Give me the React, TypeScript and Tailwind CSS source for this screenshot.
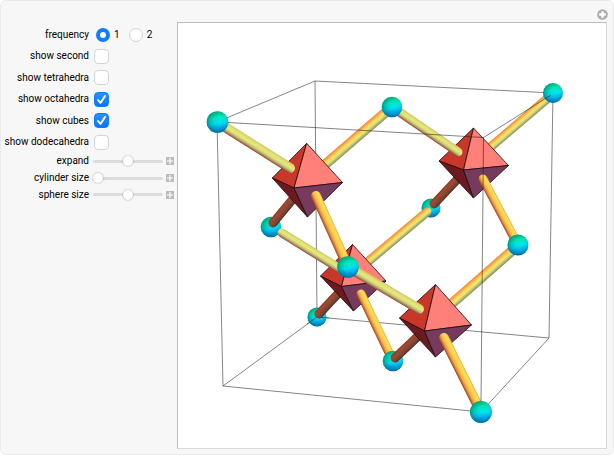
import { useState } from "react";

type Point = [number, number];

type Tone = "lime" | "gold" | "amber" | "rust";

type RodProps = {
  id: string;
  from: Point;
  to: Point;
  size: number;
  tone: Tone;
};

const tones: Record<Tone, [number, string][]> = {
  lime: [
    [0, "#c9c45e"],
    [0.2, "#e2de72"],
    [0.45, "#e4ea7e"],
    [0.68, "#c6c874"],
    [0.85, "#a8845a"],
    [1, "#93452e"],
  ],
  gold: [
    [0, "#e08a35"],
    [0.18, "#ffa646"],
    [0.42, "#ffdf62"],
    [0.62, "#e4e478"],
    [0.82, "#b3ba70"],
    [1, "#858755"],
  ],
  amber: [
    [0, "#ddb13c"],
    [0.18, "#ffde57"],
    [0.45, "#ffd053"],
    [0.68, "#f8a946"],
    [0.86, "#c87235"],
    [1, "#8d4325"],
  ],
  rust: [
    [0, "#863321"],
    [0.2, "#a1482f"],
    [0.5, "#8a4a36"],
    [0.8, "#734030"],
    [1, "#4f2a22"],
  ],
};

// Every rod is shaded across its width, starting at its upper side.
const Rod = ({ id, from, to, size, tone }: RodProps) => {
  const dx = to[0] - from[0];
  const dy = to[1] - from[1];
  const length = Math.hypot(dx, dy);
  const sign = dx < 0 ? -1 : 1;
  const nx = (((sign * -dy) / length) * size) / 2;
  const ny = (((sign * dx) / length) * size) / 2;

  return (
    <>
      <linearGradient
        id={id}
        gradientUnits="userSpaceOnUse"
        x1={from[0] - nx}
        y1={from[1] - ny}
        x2={from[0] + nx}
        y2={from[1] + ny}
      >
        {tones[tone].map(([offset, color]) => (
          <stop key={offset} offset={offset} stopColor={color} />
        ))}
      </linearGradient>
      <path
        d={`M${from.join(" ")}L${to.join(" ")}`}
        stroke={`url(#${id})`}
        strokeWidth={size}
        strokeLinecap="round"
        fill="none"
      />
    </>
  );
};

const Ball = ({ at, r }: { at: Point; r: number }) => (
  <g>
    <circle cx={at[0]} cy={at[1]} r={r} fill="url(#tint)" />
    <circle cx={at[0]} cy={at[1]} r={r} fill="url(#shade)" />
  </g>
);

type OctahedronProps = {
  top: Point;
  left: Point;
  right: Point;
  front: Point;
  bottom: Point;
};

const Octahedron = ({ top, left, right, front, bottom }: OctahedronProps) => (
  <g stroke="#1c0b0b" strokeWidth="0.8" strokeLinejoin="round">
    <polygon points={[top, left, front].join(" ")} fill="#c8372a" />
    <polygon points={[top, front, right].join(" ")} fill="#ff7f79" />
    <polygon points={[left, front, bottom].join(" ")} fill="#6c1a20" />
    <polygon points={[front, right, bottom].join(" ")} fill="#763a5c" />
  </g>
);

const Lattice = () => (
  <svg
    viewBox="178 23 428 425"
    className="block w-full"
    role="img"
    aria-label="lattice"
  >
    <defs>
      <linearGradient id="tint" x1="0.4" y1="0" x2="0.6" y2="1">
        <stop offset="0" stopColor="#00d08c" />
        <stop offset="0.3" stopColor="#00f0c4" />
        <stop offset="0.55" stopColor="#00e4f4" />
        <stop offset="0.8" stopColor="#00aaf0" />
        <stop offset="1" stopColor="#0088c8" />
      </linearGradient>
      <radialGradient id="shade" cx="0.62" cy="0.46" r="0.66">
        <stop offset="0" stopColor="#003848" stopOpacity="0" />
        <stop offset="0.4" stopColor="#003848" stopOpacity="0.06" />
        <stop offset="0.75" stopColor="#003848" stopOpacity="0.28" />
        <stop offset="1" stopColor="#003848" stopOpacity="0.6" />
      </radialGradient>
    </defs>

    {/* far edges of the box */}
    <path
      d="M217 122L315 81L553 93L549 338L317 317L315 81M317 317L223 386L217 122M223 386L481 412L549 338"
      fill="none"
      stroke="#505050"
      strokeWidth="0.7"
    />

    <Ball at={[431, 208]} r={9.5} />
    <Ball at={[317, 317]} r={9.5} />
    <path
      d="M317 317L329 318M317 317L307 324"
      stroke="#075060"
      strokeWidth="0.7"
    />
    <Rod id="r1" from={[358, 270]} to={[427, 212]} size={9} tone="gold" />
    <Rod id="r2" from={[319, 314]} to={[347, 284]} size={9} tone="rust" />
    <Rod id="r3" from={[434, 204]} to={[468, 168]} size={9} tone="rust" />
    <Rod id="r4" from={[480, 156]} to={[548, 98]} size={9} tone="gold" />
    <Ball at={[553, 93]} r={10} />
    <Rod id="r5" from={[314, 174]} to={[386, 112]} size={10} tone="gold" />

    <Octahedron
      top={[352.5, 244.5]}
      left={[320.5, 276]}
      right={[386, 281]}
      front={[341.5, 286.5]}
      bottom={[353.5, 311]}
    />
    <Octahedron
      top={[473.5, 128]}
      left={[439, 161]}
      right={[508.5, 165.5]}
      front={[463.5, 170]}
      bottom={[473.5, 198]}
    />
    <Rod id="r6" from={[392, 107]} to={[458, 152]} size={9} tone="lime" />
    <Ball at={[392, 107]} r={10.3} />
    <Rod id="r7" from={[483, 179]} to={[518, 245]} size={9} tone="amber" />
    <Rod id="r8" from={[361, 294]} to={[393, 361]} size={9} tone="amber" />

    <Ball at={[271, 227]} r={10.3} />
    <Rod id="r9" from={[282, 233]} to={[337, 267]} size={9} tone="lime" />
    <Rod id="r10" from={[273, 223]} to={[302, 188]} size={9} tone="rust" />
    <Rod id="r11" from={[441, 313]} to={[514, 249]} size={10} tone="gold" />
    <Ball at={[518, 245]} r={10.5} />
    <Ball at={[393, 361]} r={10.3} />
    <Rod id="r12" from={[395, 358]} to={[430, 325]} size={9} tone="rust" />

    <Octahedron
      top={[306.7, 143.3]}
      left={[272.3, 178]}
      right={[342.5, 182.5]}
      front={[294, 188]}
      bottom={[307.5, 217]}
    />
    <Octahedron
      top={[435.5, 284.5]}
      left={[399.5, 318]}
      right={[471.5, 325]}
      front={[424.5, 331]}
      bottom={[435.5, 357]}
    />
    <Rod id="r13" from={[217, 122]} to={[290, 168]} size={10} tone="lime" />
    <Ball at={[217.5, 122]} r={10.8} />
    <Rod id="r14" from={[348, 267]} to={[419, 309]} size={10} tone="lime" />
    <Rod id="r15" from={[316, 196]} to={[348, 267]} size={10} tone="amber" />
    <Ball at={[348, 267]} r={10.8} />
    <Rod id="r16" from={[444, 338]} to={[481, 412]} size={10} tone="amber" />

    {/* near edges run over the solids */}
    <path
      d="M228 122.5L483.5 137.5L551 95M483.5 137.5L481 402"
      fill="none"
      stroke="#202020"
      strokeOpacity="0.8"
      strokeWidth="0.7"
    />
    <Ball at={[481, 412]} r={11} />
  </svg>
);

const solids = [
  { name: "show second", checked: false },
  { name: "show tetrahedra", checked: false },
  { name: "show octahedra", checked: true },
  { name: "show cubes", checked: true },
  { name: "show dodecahedra", checked: false },
];

const sliders = [
  { name: "expand", value: 50 },
  { name: "cylinder size", value: 0 },
  { name: "sphere size", value: 50 },
];

const Toggle = ({ name, checked }: { name: string; checked: boolean }) => {
  const [isChecked, setIsChecked] = useState(checked);

  return (
    <label className="flex flex-1 items-center">
      <span className="w-[88px] text-right whitespace-nowrap">{name}</span>
      <span className="relative ml-[5px] flex">
        <input
          type="checkbox"
          checked={isChecked}
          onChange={() => setIsChecked(!isChecked)}
          className="size-[15px] appearance-none rounded-[4px] border border-[#d4d4d4] bg-white checked:border-[#0a7aff] checked:bg-linear-to-b checked:from-[#2b90ff] checked:to-[#0a74f8]"
        />
        {isChecked && (
          <svg
            viewBox="0 0 15 15"
            className="pointer-events-none absolute inset-0 size-[15px]"
            fill="none"
            stroke="white"
            strokeWidth="1.9"
            strokeLinecap="round"
            strokeLinejoin="round"
          >
            <path d="M4 8L6.5 10.9L11 4" />
          </svg>
        )}
      </span>
    </label>
  );
};

const Slider = ({ name, value }: { name: string; value: number }) => {
  const [current, setCurrent] = useState(value);

  return (
    <div className="flex flex-1 items-center">
      <label htmlFor={name} className="w-[88px] text-right whitespace-nowrap">
        {name}
      </label>
      <input
        id={name}
        type="range"
        value={current}
        onChange={(e) => setCurrent(Number(e.target.value))}
        className="ml-1 h-[3px] w-[70px] appearance-none rounded-full bg-[#dcdcdc] [&::-webkit-slider-thumb]:size-[10px] [&::-webkit-slider-thumb]:appearance-none [&::-webkit-slider-thumb]:rounded-full [&::-webkit-slider-thumb]:bg-white [&::-webkit-slider-thumb]:shadow-[0_0_2px_rgba(0,0,0,0.4)]"
      />
      <button
        aria-label={`${name} options`}
        className="ml-[3px] flex size-[8px] items-center justify-center bg-[#bcbcbc]"
      >
        <svg viewBox="0 0 8 8" className="size-[8px]" stroke="white">
          <path d="M4 1V7M1 4H7" strokeWidth="1.2" />
        </svg>
      </button>
    </div>
  );
};

const App = () => {
  const [frequency, setFrequency] = useState(1);

  return (
    <main className="relative flex items-start rounded-md border border-[#ebebeb] bg-[#f7f7f7] pt-[21px] pr-[6px] pb-[5px] font-[Roboto,sans-serif] text-[10px] leading-3 text-black">
      <section className="w-[176px] shrink-0">
        <div className="mt-0.5 flex h-[129px] flex-col">
          <div className="flex flex-1 items-center" role="radiogroup">
            <span className="w-[88px] text-right">frequency</span>
            <div className="ml-[7px] flex gap-[9px]">
              {[1, 2].map((n) => (
                <label key={n} className="flex items-center gap-1">
                  <input
                    type="radio"
                    name="frequency"
                    checked={frequency === n}
                    onChange={() => setFrequency(n)}
                    className="size-[14px] appearance-none rounded-full border border-[#d4d4d4] bg-white checked:border-[4px] checked:border-[#0f7dff]"
                  />
                  {n}
                </label>
              ))}
            </div>
          </div>
          {solids.map((solid) => (
            <Toggle key={solid.name} {...solid} />
          ))}
        </div>
        <div className="flex h-[50px] flex-col">
          {sliders.map((slider) => (
            <Slider key={slider.name} {...slider} />
          ))}
        </div>
      </section>
      <section className="min-w-0 flex-1 border border-t-[#bdbdbd] border-r-[#dadada] border-b-[#dadada] border-l-[#bdbdbd] bg-white">
        <Lattice />
      </section>
      <button
        aria-label="options"
        className="absolute top-[8px] right-[5px] size-[11px]"
      >
        <svg viewBox="0 0 11 11" fill="none">
          <circle cx="5.5" cy="5.5" r="5.3" fill="#ababab" />
          <path
            d="M5.5 2.2V8.8M2.2 5.5H8.8"
            stroke="white"
            strokeWidth="2.4"
          />
        </svg>
      </button>
    </main>
  );
};

export default App;
